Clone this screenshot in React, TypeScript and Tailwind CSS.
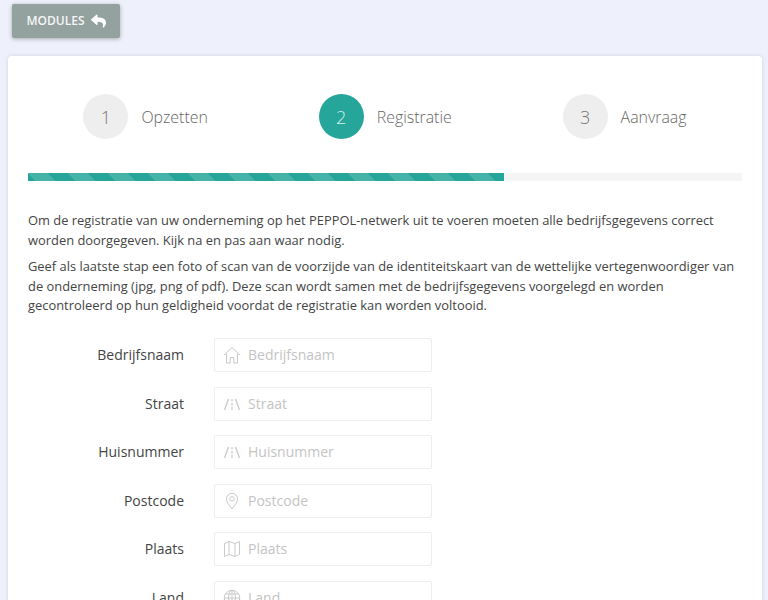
import React from "react";

const stroke = { fill: "none", stroke: "#c9c9c9", strokeWidth: 1 } as const;

function Home() {
  return (
    <svg width="18" height="18" viewBox="0 0 18 18" {...stroke}>
      <path d="M1 9 9 1.500 17 9M3.500 7.500V17h3.700v-5.500h3.600V17h3.700V7.500" />
    </svg>
  );
}
function Road() {
  return (
    <svg width="18" height="18" viewBox="0 0 18 18" {...stroke}>
      <path d="M5.500 4 1.500 15M12.500 4l4 11M9 4v2.500M9 8v2.500M9 12v3" strokeWidth="1.300" />
    </svg>
  );
}
function Pin() {
  return (
    <svg width="18" height="18" viewBox="0 0 18 18" {...stroke}>
      <path d="M9 17C6 13 3.500 10 3.500 6.800a5.500 5.500 0 0 1 11 0C14.500 10 12 13 9 17Z" />
      <circle cx="9" cy="6.800" r="2.200" />
    </svg>
  );
}
function MapIcon() {
  return (
    <svg width="18" height="18" viewBox="0 0 18 18" {...stroke}>
      <path d="M1.500 3.500 6 1.500l6 2 4.500-2v13l-4.500 2-6-2-4.500 2ZM6 1.500v13M12 3.500v13" />
    </svg>
  );
}
function Globe() {
  return (
    <svg width="18" height="18" viewBox="0 0 18 18" {...stroke}>
      <circle cx="9" cy="9" r="7.800" />
      <ellipse cx="9" cy="9" rx="3.500" ry="7.800" />
      <path d="M9 1.200v15.600M1.200 9h15.600M2.300 5h13.400M2.300 13h13.400" />
    </svg>
  );
}

const fields: [string, React.ReactNode][] = [
  ["Bedrijfsnaam", <Home />],
  ["Straat", <Road />],
  ["Huisnummer", <Road />],
  ["Postcode", <Pin />],
  ["Plaats", <MapIcon />],
  ["Land", <Globe />],
];

function Step({ n, label, active }: { n: number; label: string; active?: boolean }) {
  return (
    <div className="flex items-center gap-[13px] font-light">
      <div
        className={
          active
            ? "flex h-[45px] w-[45px] items-center justify-center rounded-full bg-[#26a69a] text-[18px] text-[#d5f0ed]"
            : "flex h-[45px] w-[45px] items-center justify-center rounded-full bg-[#eeeeee] text-[18px] text-[#777777]"
        }
      >
        {n}
      </div>
      <span className="text-[15.900px] text-[#666666]">{label}</span>
    </div>
  );
}

export default function App() {
  return (
    <div className="min-h-[600px] bg-[#eef1fb] font-['Open_Sans',sans-serif] text-[14px] leading-[20px] text-[#444444]">
      <div className="px-[12px] pt-[4px]">
        <button className="flex h-[34px] w-[108px] items-center justify-center gap-[6px] rounded-[2px] bg-[#93a19f] text-[12px] font-semibold text-[#f4f6f6] shadow-[0_1px_4px_rgba(0,0,0,0.3)]">
          MODULES
          <svg width="15" height="14" viewBox="0 0 512 448" fill="#ffffff">
            <path d="M8 160 184 8c15-13 40-3 40 18v80c161 2 288 34 288 188 0 62-40 124-84 156-14 10-33-3-28-19 46-145-21-183-176-185v88c0 21-25 31-40 18L8 200c-11-10-11-30 0-40Z" />
          </svg>
        </button>
      </div>
      <div className="ml-[8px] mr-[6px] mt-[18px] rounded-[4px] bg-white px-[20px] pb-[40px] pt-[38px] shadow-[0_0_4px_rgba(0,0,0,0.12)]">
        <div className="flex justify-around">
          <Step n={1} label="Opzetten" />
          <Step n={2} label="Registratie" active />
          <Step n={3} label="Aanvraag" />
        </div>
        <div className="mt-[34px] h-[8px] bg-[#f5f5f5]">
          <div className="h-full w-[476px] bg-[#26a69a] bg-[linear-gradient(45deg,rgba(255,255,255,0.15)_25%,transparent_25%,transparent_50%,rgba(255,255,255,0.15)_50%,rgba(255,255,255,0.15)_75%,transparent_75%,transparent)] bg-[length:40px_40px]" />
        </div>
        <p className="mt-[30px] text-[12.900px] leading-[19.500px]">
          Om de registratie van uw onderneming op het PEPPOL-netwerk uit te voeren moeten alle bedrijfsgegevens correct worden doorgegeven. Kijk na en pas aan waar nodig.
        </p>
        <p className="mt-[7px] text-[12.900px] leading-[19.500px]">
          Geef als laatste stap een foto of scan van de voorzijde van de identiteitskaart van de wettelijke vertegenwoordiger van de onderneming (jpg, png of pdf). Deze scan wordt samen met de bedrijfsgegevens voorgelegd en worden gecontroleerd op hun geldigheid voordat de registratie kan worden voltooid.
        </p>
        <div className="mt-[22.500px] flex flex-col gap-[14.600px]">
          {fields.map(([label, icon]) => (
            <div key={label} className="flex items-center gap-[30px]">
              <label className="w-[156px] text-right">{label}</label>
              <div className="flex h-[34px] w-[218px] items-center gap-[7px] rounded-[2px] border border-[#eeeeee] pl-[8px] text-[#c4c4c4]">
                {icon}
                <span>{label}</span>
              </div>
            </div>
          ))}
        </div>
      </div>
    </div>
  );
}
